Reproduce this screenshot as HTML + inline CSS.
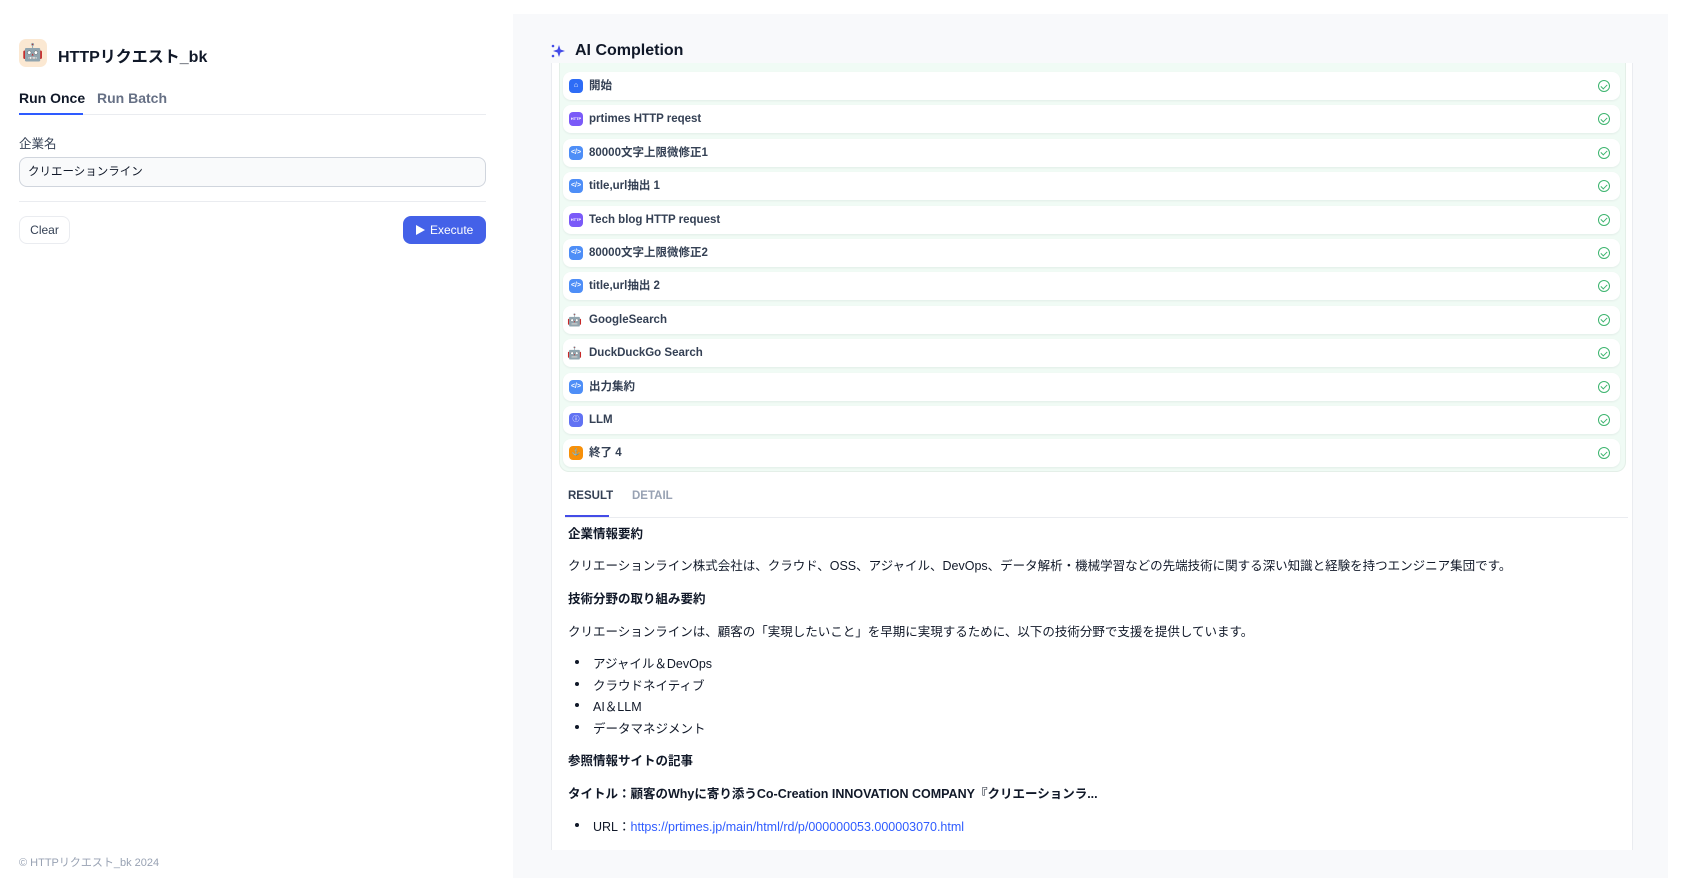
<!DOCTYPE html>
<html><head><meta charset="utf-8"><style>
*{box-sizing:border-box;margin:0;padding:0}
body{width:1682px;height:892px;background:#fff;font-family:"Liberation Sans","Noto Sans CJK JP",sans-serif;color:#1d2939;position:relative;overflow:hidden}
.abs{position:absolute}
.row{position:absolute;left:563px;width:1057px;height:28px;background:#fff;border-radius:8px;box-shadow:0 1px 2px rgba(16,24,40,.06);font-size:11.5px;font-weight:bold;color:#344054;line-height:28px;padding-left:26px}
.ic{position:absolute;left:6px;top:7px;width:14px;height:14px;border-radius:4px;color:#fff;font-size:7px;line-height:14px;text-align:center}
.ok{position:absolute;right:10px;top:8px;width:12px;height:12px;border:1.5px solid #3cb46e;border-radius:50%}
.ok:after{content:"";position:absolute;left:2.5px;top:1.5px;width:3px;height:5px;border:solid #3cb46e;border-width:0 1.3px 1.3px 0;transform:rotate(45deg)}
.t{position:absolute;left:568px;font-size:12.5px;color:#101828;white-space:nowrap}
.b{font-weight:bold}
.li{position:absolute;left:593px;font-size:12.5px;color:#101828}
.li:before{content:"";position:absolute;left:-18px;top:7px;width:4px;height:4px;border-radius:50%;background:#101828}
</style></head><body>
<div class="abs" style="left:19px;top:39px;width:28px;height:28px;border-radius:7px;background:#fbe8d2;font-size:17px;text-align:center;line-height:28px">🤖</div>
<div class="abs b" style="left:58px;top:43px;font-size:16px;color:#101828">HTTPリクエスト_bk</div>
<div class="abs" style="left:19px;top:90px;font-size:14px;font-weight:bold;color:#101828">Run Once</div>
<div class="abs" style="left:97px;top:90px;font-size:14px;font-weight:bold;color:#667085">Run Batch</div>
<div class="abs" style="left:19px;top:114px;width:467px;height:1px;background:#eaecf0"></div>
<div class="abs" style="left:19px;top:113px;width:64px;height:2px;background:#2e5bff"></div>
<div class="abs" style="left:19px;top:133px;font-size:12.5px;color:#344054">企業名</div>
<div class="abs" style="left:19px;top:157px;width:467px;height:30px;border:1px solid #d0d5dd;border-radius:8px;background:#f9fafb;font-size:11.5px;line-height:28px;padding-left:8px;color:#101828">クリエーションライン</div>
<div class="abs" style="left:19px;top:201px;width:467px;height:1px;background:#eaecf0"></div>
<div class="abs" style="left:19px;top:216px;width:51px;height:28px;border:1px solid #eaecf0;border-radius:8px;font-size:12px;line-height:26px;text-align:center;color:#344054">Clear</div>
<div class="abs" style="left:403px;top:216px;width:83px;height:28px;border-radius:8px;background:#4461e8;font-size:12px;line-height:28px;color:#fff;padding-left:27px">Execute<span style="position:absolute;left:13px;top:9px;border-left:9px solid #fff;border-top:5px solid transparent;border-bottom:5px solid transparent"></span></div>
<div class="abs" style="left:19px;top:854px;font-size:11px;color:#98a2b3">© HTTPリクエスト_bk 2024</div>

<div class="abs" style="left:513px;top:14px;width:1155px;height:864px;background:#f8f9fb"></div>
<div class="abs" style="left:551px;top:63px;width:1082px;height:787px;background:#fff;border-left:1px solid #eaecf0;border-right:1px solid #eaecf0"></div>
<svg class="abs" style="left:550px;top:43px" width="16" height="16" viewBox="0 0 16 16"><path d="M9 2 L10.5 6.5 L15 8 L10.5 9.5 L9 14 L7.5 9.5 L3 8 L7.5 6.5Z" fill="#444ce7"/><circle cx="3" cy="3" r="1.3" fill="#444ce7"/><circle cx="3" cy="13" r="1.3" fill="#444ce7"/></svg>
<div class="abs" style="left:575px;top:42px;font-size:16px;font-weight:bold;color:#101828">AI Completion</div>
<div class="abs" style="left:559px;top:63px;width:1067px;height:409px;background:#f0fbf5;border:1px solid #e4efe8;border-top:none;border-radius:0 0 10px 10px"></div>

<div class="row" style="top:72px"><span class="ic" style="background:#2e6cf6">⌂</span>開始<span class="ok"></span></div>
<div class="row" style="top:105.4px"><span class="ic" style="background:#7a5af8;font-size:4px">HTTP</span>prtimes HTTP reqest<span class="ok"></span></div>
<div class="row" style="top:138.8px"><span class="ic" style="background:#4e8ef7">&lt;/&gt;</span>80000文字上限微修正1<span class="ok"></span></div>
<div class="row" style="top:172.2px"><span class="ic" style="background:#4e8ef7">&lt;/&gt;</span>title,url抽出 1<span class="ok"></span></div>
<div class="row" style="top:205.6px"><span class="ic" style="background:#7a5af8;font-size:4px">HTTP</span>Tech blog HTTP request<span class="ok"></span></div>
<div class="row" style="top:239px"><span class="ic" style="background:#4e8ef7">&lt;/&gt;</span>80000文字上限微修正2<span class="ok"></span></div>
<div class="row" style="top:272.4px"><span class="ic" style="background:#4e8ef7">&lt;/&gt;</span>title,url抽出 2<span class="ok"></span></div>
<div class="row" style="top:305.8px"><span class="ic" style="font-size:12px;left:4px">🤖</span>GoogleSearch<span class="ok"></span></div>
<div class="row" style="top:339.2px"><span class="ic" style="font-size:12px;left:4px">🤖</span>DuckDuckGo Search<span class="ok"></span></div>
<div class="row" style="top:372.6px"><span class="ic" style="background:#4e8ef7">&lt;/&gt;</span>出力集約<span class="ok"></span></div>
<div class="row" style="top:406px"><span class="ic" style="background:#6172f3">ⓘ</span>LLM<span class="ok"></span></div>
<div class="row" style="top:439.4px"><span class="ic" style="background:#f79009">⚓</span>終了 4<span class="ok"></span></div>

<div class="abs b" style="left:568px;top:490px;font-size:11.5px;color:#344054">RESULT</div>
<div class="abs b" style="left:632px;top:490px;font-size:11.5px;color:#98a2b3">DETAIL</div>
<div class="abs" style="left:565px;top:517px;width:1063px;height:1px;background:#eaecf0"></div>
<div class="abs" style="left:565px;top:515px;width:44px;height:2px;background:#444ce7"></div>

<div class="t b" style="top:523px">企業情報要約</div>
<div class="t" style="top:555px">クリエーションライン株式会社は、クラウド、OSS、アジャイル、DevOps、データ解析・機械学習などの先端技術に関する深い知識と経験を持つエンジニア集団です。</div>
<div class="t b" style="top:588px">技術分野の取り組み要約</div>
<div class="t" style="top:621px">クリエーションラインは、顧客の「実現したいこと」を早期に実現するために、以下の技術分野で支援を提供しています。</div>
<div class="li" style="top:653px">アジャイル＆DevOps</div>
<div class="li" style="top:675px">クラウドネイティブ</div>
<div class="li" style="top:696px">AI＆LLM</div>
<div class="li" style="top:718px">データマネジメント</div>
<div class="t b" style="top:750px">参照情報サイトの記事</div>
<div class="t b" style="top:783px">タイトル：顧客のWhyに寄り添うCo-Creation INNOVATION COMPANY『クリエーションラ...</div>
<div class="li" style="top:816px">URL：<span style="color:#2e5bff">https://prtimes.jp/main/html/rd/p/000000053.000003070.html</span></div>
</body></html>
